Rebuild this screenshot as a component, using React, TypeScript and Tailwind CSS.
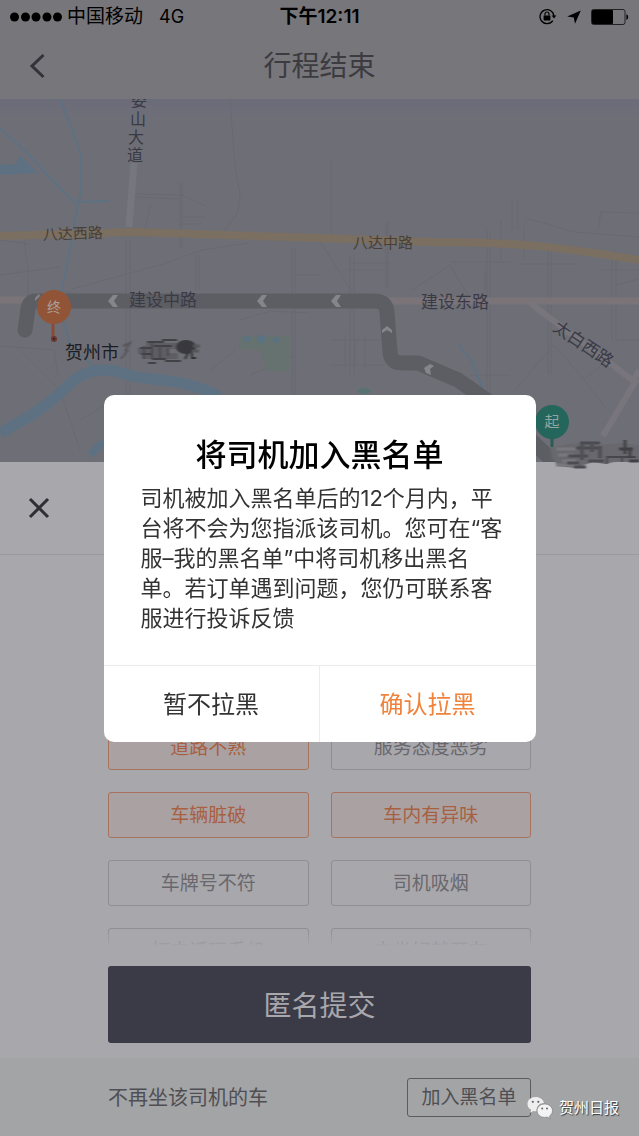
import React from "react";

const tags = [
  { text: "道路不熟", active: true },
  { text: "服务态度恶劣", active: false },
  { text: "车辆脏破", active: true },
  { text: "车内有异味", active: true },
  { text: "车牌号不符", active: false },
  { text: "司机吸烟", active: false },
  { text: "打电话玩手机", active: false },
  { text: "未坐好就开车", active: false },
];

const StatusBar = () => (
  <div className="flex h-[33px] items-center justify-between px-2.5 text-black">
    <div className="flex flex-1 items-center">
      <svg width="53" height="12" viewBox="0 0 53 12" aria-hidden="true">
        <circle cx="4.5" cy="6" r="4.5" />
        <circle cx="15.5" cy="6" r="4.5" />
        <circle cx="26" cy="6" r="4.5" />
        <circle cx="37" cy="6" r="4.5" />
        <circle cx="47.5" cy="6" r="4.5" />
      </svg>
      <span className="ml-1 text-[19px] leading-6">中国移动</span>
      <span className="ml-4 text-lg leading-6">4G</span>
    </div>
    <div className="text-[19px] leading-6 font-semibold">下午12:11</div>
    <div className="flex flex-1 items-center justify-end gap-2.5">
      <svg width="18" height="17" viewBox="0 0 18 17" fill="none" stroke="#000" aria-hidden="true">
        <path d="M13.8 12.6A7 7 0 1 1 15 8.2" strokeWidth="1.3" />
        <path d="M12.6 7.4h4.8L15 10.6z" fill="#000" stroke="none" />
        <rect x="4.6" y="7.4" width="6.8" height="5" rx="0.6" fill="#000" stroke="none" />
        <path d="M6 7.6V6a2 2 0 0 1 4 0v1.6" strokeWidth="1.2" />
      </svg>
      <svg width="14" height="14" viewBox="0 0 14 14" aria-hidden="true">
        <path d="M13.8 0.4L8 13.8 6.8 7.4 0.2 6.4z" />
      </svg>
      <svg width="38" height="16" viewBox="0 0 38 16" aria-hidden="true">
        <rect x="0.5" y="0.5" width="33.5" height="15" rx="2" fill="none" stroke="#222" />
        <rect x="1" y="1" width="21" height="14" rx="1" />
        <path d="M35.4 5.2c2.4.6 2.4 5 0 5.6z" />
      </svg>
    </div>
  </div>
);

const RouteMap = () => (
  <svg
    className="relative block h-[363px] w-full overflow-visible bg-[#6e6f76]"
    viewBox="0 99 639 363"
    preserveAspectRatio="xMidYMin slice"
    role="img"
    aria-label="行程路线"
  >
    <defs>
      <filter id="smudge" x="-20%" y="-50%" width="140%" height="200%">
        <feGaussianBlur stdDeviation="1.1 0.7" />
      </filter>
      <clipPath id="mapArea">
        <rect x="0" y="99" width="639" height="363" />
      </clipPath>
      <linearGradient id="topShade" x1="0" y1="0" x2="0" y2="1">
        <stop offset="0" stopColor="#6b6c79" />
        <stop offset="1" stopColor="#6e6f76" />
      </linearGradient>
    </defs>

    <g clipPath="url(#mapArea)" fill="none">
      <rect x="0" y="99" width="639" height="24" fill="url(#topShade)" />

      {/* minor streets */}
      <g stroke="#696a71" strokeWidth="1">
        <path d="M230 99l5 68 5 27-2 18-16 22M180 183v65M182 183v65M134 194l48 1 24 11M134 197l46 2M150 205l-5 26M182 217h25M182 224h20" />
        <path d="M126 240v159M130 240v159M24 240l4 30v30M196 255v35M199 255v35M292 248v150M295 248v150M318 238l34 54M350 255v120M354 255v120M72 289l88-24 42-15 46-7" />
        <path d="M331 160v80M386 222v66M388 222v66M487 230v165M490 230v165M501 220v40M524 225v35M512 200v30M518 200v30M526 218l48 14 65 5M598 230l3-18 38 1M548 245v130M551 245v130M612 250v90M616 250v90" />
        <path d="M412 290l38-25 18 30M350 263h40M347 270h42M451 262h60M517 264h60M0 346l54 4 4 25M0 240l30 4M210 370l26-20M250 375l46-20M330 340h52M330 365h55M345 335v32M355 340v26M365 336v34M296 275h24M616 285l23-6M616 340h23" />
        <path d="M514 391l40-46 30 34 16-12M600 270h39M584 380l22 28M80 420l24-14M20 350l40 40 20 60M470 375h40M485 270v20M0 275l60-8M60 290l14 4M240 320l30-9 40 2" />
      </g>

      {/* water */}
      <g stroke="#5d7183">
        <path d="M60 99l11 28 10 28v35l-5 25-9 50-6 28v22l9 28-2 8 16 6 10 10" strokeWidth="2" />
        <path d="M0 128l27 25 30 32 19 19M78 202l31-1" strokeWidth="2" />
        <path d="M458 344l14 18 13 32" strokeWidth="2" />
        <path d="M0 433l30-17 20-14 24-22c18-13 39-12 54-5 24 7 52 1 92 22" strokeWidth="11" />
        <path d="M90 455l10-10 12-4" strokeWidth="8" />
      </g>
      <path d="M0 165l16-1 4-9 18 18-38 2z" fill="#5d7183" />
      <path d="M239 336h50v36l-22-2-7-20-21-1z" fill="#66726f" />
      <g fill="#5b7184">
        <circle cx="247" cy="339" r="3" />
        <circle cx="261" cy="339" r="4" />
        <circle cx="276" cy="340" r="3" />
      </g>
      <ellipse cx="364" cy="391" rx="7" ry="3" fill="#58736f" />

      {/* larger roads */}
      <path d="M134 163l-5 64" stroke="#75767e" strokeWidth="7" />
      <path d="M0 300h40M380 301h259" stroke="#7a7479" strokeWidth="7" />
      <path d="M530 303l105 79-32 54M633 382l6-12" stroke="#78767c" strokeWidth="6" />
      <path d="M0 236l133-4 187 6 110 4c90 0 130 5 209 18" stroke="#7a6f61" strokeWidth="8" />

      {/* driven route */}
      <path
        d="M25 330l3-21q1-8 8-8h338q13 0 13 12l3 38q0 12 12 12h16l40 17 34 24 60 56"
        stroke="#5d5e63"
        strokeWidth="15"
        strokeLinecap="round"
        strokeLinejoin="round"
      />
      <g fill="#85868b">
        <path d="M113 295h5l-4 6 4 6h-5l-5-6z" />
        <path d="M262 295h5l-4 6 4 6h-5l-5-6z" />
        <path d="M336 295h5l-4 6 4 6h-5l-5-6z" />
        <path d="M382 333v-3l5-4 5 4v3l-5-3z" />
        <path d="M430 364l4 2-4 3 1 6-5-2-2-5z" />
        <path d="M40 296l-5 5v-3l4-4z" />
      </g>
    </g>

    {/* road names */}
    <g fill="#484038" fontSize="15">
      <text x="43" y="240" transform="rotate(-2 43 240)">八达西路</text>
      <text x="353" y="248">八达中路</text>
    </g>
    <g fill="#3a3a46" fontSize="17">
      <text x="129" y="306">建设中路</text>
      <text x="421" y="308">建设东路</text>
      <text x="552" y="330" transform="rotate(34 552 330)">太白西路</text>
      <g clipPath="url(#mapArea)">
        <text x="131" y="106" fontSize="16">娄</text>
        <text x="130" y="125" fontSize="16">山</text>
        <text x="128" y="143" fontSize="16">大</text>
        <text x="127" y="161" fontSize="16">道</text>
      </g>
    </g>

    {/* destination */}
    <path d="M53 322v16" stroke="#8a4a34" strokeWidth="3" />
    <circle cx="54" cy="339" r="2" fill="#2c2224" stroke="#6b3630" strokeWidth="2" />
    <circle cx="54" cy="307" r="17" fill="#925436" />
    <text x="54" y="312" fontSize="14" textAnchor="middle" fill="#aaa09c">终</text>
    <text x="65" y="359" fontSize="18" fill="#1c1c22">贺州市</text>
    <g filter="url(#smudge)" fill="none">
      <path d="M123 346l7-3-5 8M121 359l7-9" stroke="#55555a" strokeWidth="2" />
      <path d="M138 351h30M142 356h36M146 346h34" stroke="#5d5d63" strokeWidth="6" />
      <path d="M147 342h17M140 348h12M154 346h18M162 340h15M141 354h10M152 359h14M165 361h16M148 363h8" stroke="#3f3f44" strokeWidth="2" />
      <path d="M144 346v13M152 343v16M160 345v13M168 348v8" stroke="#47474c" strokeWidth="2" />
      <ellipse cx="186" cy="347" rx="10" ry="7" fill="#38383d" />
      <path d="M193 346h7M192 351h7" stroke="#55555a" strokeWidth="3" />
      <path d="M188 353l-3 6M192 353v5h4" stroke="#303035" strokeWidth="2" />
    </g>

    {/* start */}
    <path d="M552 436v11" stroke="#2a5d55" strokeWidth="3" />
    <circle cx="552" cy="422" r="17" fill="#24665c" />
    <text x="552" y="427" fontSize="15" textAnchor="middle" fill="#93a5a2">起</text>
    <g filter="url(#smudge)" fill="none">
      <path d="M550 448l18-4 12-1 18 2 22-2 19 2v17l-20-1-14 3-12-2-18 6-17-2-6-8z" fill="#68686e" />
      <path d="M556 449h20M558 455h16M562 461h14M556 465h22" stroke="#77777c" strokeWidth="3" />
      <path d="M580 443h20M576 448h24M568 456h20M588 461h16M567 463h12M574 467h12" stroke="#4c4c51" strokeWidth="3" />
      <path d="M582 444v16M592 443v9M600 446v12" stroke="#505055" strokeWidth="4" />
      <path d="M606 457h30M607 457v7M622 457v5" stroke="#46464b" strokeWidth="2" />
      <path d="M625 440v14M619 449h14M630 448v10M629 461h10" stroke="#404045" strokeWidth="3" />
    </g>
  </svg>
);

const TagList = () => (
  <div className="relative h-[226px] overflow-hidden">
    <div className="grid grid-cols-2 gap-[22px]">
      {tags.map((tag) => (
        <button
          key={tag.text}
          type="button"
          aria-pressed={tag.active}
          className={`h-[46px] rounded-[3px] border pt-0.5 text-[19px] leading-6 ${
            tag.active
              ? "border-[#a8735e] bg-[#aaa2a2] text-[#a85f42]"
              : "border-[#8f8e94] text-[#68676c]"
          }`}
        >
          {tag.text}
        </button>
      ))}
    </div>
    <div className="pointer-events-none absolute inset-x-0 bottom-0 h-5 bg-linear-to-b from-transparent to-[#a8a7ac] to-80%" />
  </div>
);

const BlacklistDialog = () => (
  <div className="fixed inset-0 flex items-center justify-center">
    <div
      role="dialog"
      aria-modal="true"
      aria-labelledby="dialog-title"
      className="w-[432px] overflow-hidden rounded-[10px] bg-white"
    >
      <div className="h-[270px] pt-10">
        <h2 id="dialog-title" className="text-center text-[31px] leading-10 font-medium text-black">
          将司机加入黑名单
        </h2>
        <p className="mt-2 pr-[26px] pl-[37px] text-[22px] leading-[30px] text-[#333]">
          司机被加入黑名单后的12个月内，平台将不会为您指派该司机。您可在“客服–我的黑名单”中将司机移出黑名单。若订单遇到问题，您仍可联系客服进行投诉反馈
        </p>
      </div>
      <div className="grid h-[77px] grid-cols-2 border-t border-[#ececec] text-2xl">
        <button type="button" className="border-r border-[#ececec] pt-0.5 text-[#333]">
          暂不拉黑
        </button>
        <button type="button" className="pt-0.5 text-[#f0833c]">
          确认拉黑
        </button>
      </div>
    </div>
  </div>
);

const Watermark = () => (
  <div className="absolute right-5 bottom-4 flex items-center gap-1.5 text-[15px] leading-6 text-white [text-shadow:1px_1px_1px_#333]">
    <svg width="26" height="24" viewBox="0 0 26 24" aria-hidden="true">
      <path d="M8.5 1C3.8 1 .5 4 .5 8c0 2.400 1.200 4.400 3.200 5.700L3 16.800l3.400-1.900c1 .2 2 .4 3.200.3C9 10.500 12.600 7 17 7 16.200 3.400 12.800 1 8.500 1z" fill="#eee" />
      <path d="M17.600 8c-4.300 0-7.500 3-7.500 6.700 0 3.800 3.300 6.700 7.500 6.700.9 0 1.800-.2 2.600-.4l3 1.700-.7-2.700c1.800-1.200 3-3.100 3-5.300C25.500 11 22 8 17.600 8z" fill="#f3f3f3" stroke="#77777a" strokeWidth="0.6" />
      <g fill="#66666a">
        <circle cx="5.8" cy="5.8" r="1.1" />
        <circle cx="11.3" cy="5.8" r="1.1" />
        <circle cx="15.2" cy="12.5" r="1" />
        <circle cx="20" cy="12.5" r="1" />
      </g>
    </svg>
    <span>贺州日报</span>
  </div>
);

const App = () => {
  return (
    <div className="relative flex min-h-screen flex-col overflow-x-hidden bg-[#a8a7ac] font-['Inter','Noto_Sans_CJK_SC',sans-serif]">
      <header className="bg-[#77767b]">
        <StatusBar />
        <div className="grid h-[66px] grid-cols-[80px_1fr_80px] items-center">
          <button type="button" aria-label="返回" className="pl-[29px]">
            <svg width="18" height="26" viewBox="0 0 18 26" fill="none" stroke="#333238" strokeWidth="3">
              <path d="M14.5 2L3 13l11.500 11" />
            </svg>
          </button>
          <h1 className="text-center text-[28px] leading-9 text-[#3c3b40]">行程结束</h1>
        </div>
      </header>

      <RouteMap />

      <section className="flex h-[93px] items-center border-b border-[#9b9a9f] pl-7">
        <button type="button" aria-label="关闭">
          <svg width="22" height="22" viewBox="0 0 22 22" fill="none" stroke="#2f2e34" strokeWidth="3">
            <path d="M2 2l18 18M20 2L2 20" />
          </svg>
        </button>
      </section>

      <main className="mx-auto w-full max-w-[423px] pt-[169px]">
        <TagList />
        <button
          type="button"
          className="mt-4 h-[77px] w-full rounded-[3px] bg-[#3b3b48] pt-0.5 text-[28px] text-[#a8a7ac]"
        >
          匿名提交
        </button>
      </main>

      <footer className="mt-[15px] flex flex-1 items-center bg-[#a3a4a6]">
        <div className="mx-auto flex w-full max-w-[423px] items-center justify-between">
          <span className="pt-0.5 text-xl text-[#4f4f53]">不再坐该司机的车</span>
          <button
            type="button"
            className="h-[39px] w-[124px] rounded-[3px] border border-[#5c5c60] pt-0.5 text-[19px] text-[#4f4f53]"
          >
            加入黑名单
          </button>
        </div>
      </footer>

      <Watermark />
      <BlacklistDialog />
    </div>
  );
};

export default App;
